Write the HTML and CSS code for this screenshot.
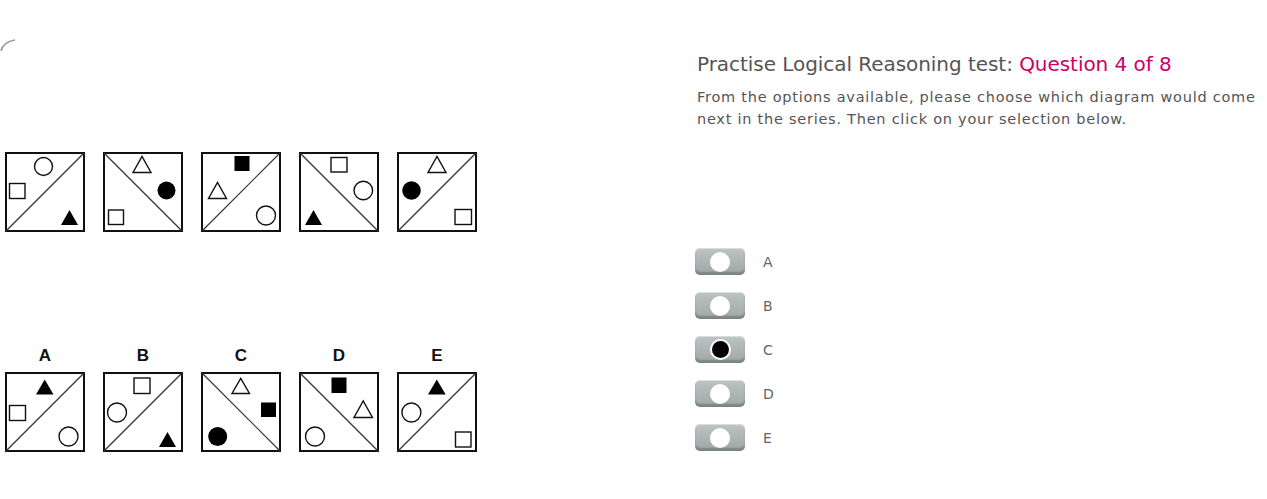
FILE: index.html
```html
<!DOCTYPE html>
<html>
<head>
<meta charset="utf-8">
<link rel="stylesheet" href="styles.css">
</head>
<body>
<div class="page">
  <div class="left">
    <svg class="corner" width="16" height="14" viewBox="0 0 16 14"><path d="M1 13 Q3 4 15 2" fill="none" stroke="#999" stroke-width="1.6"/></svg>
    <div class="row seq">
      <svg class="box" viewBox="0 0 80 80"><rect x="1" y="1" width="78" height="78" fill="#fff" stroke="#111" stroke-width="2"/><line x1="1" y1="79" x2="79" y2="1" stroke="#333" stroke-width="1.2"/><circle cx="38.5" cy="14.5" r="9" fill="none" stroke="#111" stroke-width="1.4"/><rect x="4.5" y="31.5" width="15.5" height="15" fill="none" stroke="#111" stroke-width="1.4"/><polygon points="56,73 73,73 64.5,58" fill="#000"/></svg>
      <svg class="box" viewBox="0 0 80 80"><rect x="1" y="1" width="78" height="78" fill="#fff" stroke="#111" stroke-width="2"/><line x1="1" y1="1" x2="79" y2="79" stroke="#333" stroke-width="1.2"/><polygon points="30,20.5 48,20.5 39,4.5" fill="none" stroke="#111" stroke-width="1.4"/><circle cx="63.5" cy="38.5" r="9" fill="#000"/><rect x="5.5" y="58" width="15" height="14.5" fill="none" stroke="#111" stroke-width="1.4"/></svg>
      <svg class="box" viewBox="0 0 80 80"><rect x="1" y="1" width="78" height="78" fill="#fff" stroke="#111" stroke-width="2"/><line x1="1" y1="79" x2="79" y2="1" stroke="#333" stroke-width="1.2"/><rect x="33.5" y="4" width="15" height="15" fill="#000"/><polygon points="7.5,46.5 25.5,46.5 16.5,30.5" fill="none" stroke="#111" stroke-width="1.4"/><circle cx="65" cy="63.5" r="9.5" fill="none" stroke="#111" stroke-width="1.4"/></svg>
      <svg class="box" viewBox="0 0 80 80"><rect x="1" y="1" width="78" height="78" fill="#fff" stroke="#111" stroke-width="2"/><line x1="1" y1="1" x2="79" y2="79" stroke="#333" stroke-width="1.2"/><rect x="32" y="5.5" width="16" height="14.5" fill="none" stroke="#111" stroke-width="1.4"/><circle cx="64.3" cy="38.5" r="9.3" fill="none" stroke="#111" stroke-width="1.4"/><polygon points="6,73 23,73 14.5,58" fill="#000"/></svg>
      <svg class="box" viewBox="0 0 80 80"><rect x="1" y="1" width="78" height="78" fill="#fff" stroke="#111" stroke-width="2"/><line x1="1" y1="79" x2="79" y2="1" stroke="#333" stroke-width="1.2"/><polygon points="31,20.5 49,20.5 40,4.5" fill="none" stroke="#111" stroke-width="1.4"/><circle cx="14.5" cy="38.5" r="9.3" fill="#000"/><rect x="58" y="57.5" width="16.5" height="15" fill="none" stroke="#111" stroke-width="1.4"/></svg>
    </div>
    <div class="row letters">
      <span class="letter">A</span><span class="letter">B</span><span class="letter">C</span><span class="letter">D</span><span class="letter">E</span>
    </div>
    <div class="row">
      <svg class="box" viewBox="0 0 80 80"><rect x="1" y="1" width="78" height="78" fill="#fff" stroke="#111" stroke-width="2"/><line x1="1" y1="79" x2="79" y2="1" stroke="#333" stroke-width="1.2"/><polygon points="31,22.5 48.5,22.5 39.7,7.5" fill="#000"/><rect x="4.5" y="33.5" width="16" height="15" fill="none" stroke="#111" stroke-width="1.4"/><circle cx="63.5" cy="64.5" r="9.5" fill="none" stroke="#111" stroke-width="1.4"/></svg>
      <svg class="box" viewBox="0 0 80 80"><rect x="1" y="1" width="78" height="78" fill="#fff" stroke="#111" stroke-width="2"/><line x1="1" y1="79" x2="79" y2="1" stroke="#333" stroke-width="1.2"/><rect x="31" y="6" width="16" height="15.5" fill="none" stroke="#111" stroke-width="1.4"/><circle cx="14" cy="40.5" r="9.5" fill="none" stroke="#111" stroke-width="1.4"/><polygon points="56,75 73,75 64.5,60" fill="#000"/></svg>
      <svg class="box" viewBox="0 0 80 80"><rect x="1" y="1" width="78" height="78" fill="#fff" stroke="#111" stroke-width="2"/><line x1="1" y1="1" x2="79" y2="79" stroke="#333" stroke-width="1.2"/><polygon points="31,21.5 48.5,21.5 39.7,6.5" fill="none" stroke="#111" stroke-width="1.4"/><rect x="60" y="30.5" width="15" height="14.5" fill="#000"/><circle cx="16.7" cy="64.5" r="9.5" fill="#000"/></svg>
      <svg class="box" viewBox="0 0 80 80"><rect x="1" y="1" width="78" height="78" fill="#fff" stroke="#111" stroke-width="2"/><line x1="1" y1="1" x2="79" y2="79" stroke="#333" stroke-width="1.2"/><rect x="32.5" y="5.5" width="15" height="15.5" fill="#000"/><polygon points="55,45.5 73.5,45.5 64.2,29" fill="none" stroke="#111" stroke-width="1.4"/><circle cx="16" cy="64.5" r="9.5" fill="none" stroke="#111" stroke-width="1.4"/></svg>
      <svg class="box" viewBox="0 0 80 80"><rect x="1" y="1" width="78" height="78" fill="#fff" stroke="#111" stroke-width="2"/><line x1="1" y1="79" x2="79" y2="1" stroke="#333" stroke-width="1.2"/><polygon points="31,22.5 48.7,22.5 39.8,7.5" fill="#000"/><circle cx="14.4" cy="40.5" r="9.5" fill="none" stroke="#111" stroke-width="1.4"/><rect x="58.5" y="60" width="15.5" height="15" fill="none" stroke="#111" stroke-width="1.4"/></svg>
    </div>
  </div>
  <div class="right">
    <h1 class="title">Practise Logical Reasoning test: <span class="accent">Question 4 of 8</span></h1>
    <p class="intro">From the options available, please choose which diagram would come next in the series. Then click on your selection below.</p>
    <ul class="options">
      <li class="option"><span class="btn"><span class="dot"></span></span><span class="opt-label">A</span></li>
      <li class="option"><span class="btn"><span class="dot"></span></span><span class="opt-label">B</span></li>
      <li class="option"><span class="btn"><span class="dot selected"></span></span><span class="opt-label">C</span></li>
      <li class="option"><span class="btn"><span class="dot"></span></span><span class="opt-label">D</span></li>
      <li class="option"><span class="btn"><span class="dot"></span></span><span class="opt-label">E</span></li>
    </ul>
  </div>
</div>
</body>
</html>
```

FILE: styles.css
```css
* { box-sizing: border-box; }
html, body { margin: 0; padding: 0; background: #fff; }
body { font-family: "DejaVu Sans", Verdana, sans-serif; }
.page { display: flex; width: 1267px; height: 499px; }
.left { width: 697px; padding: 38px 0 0 5px; display: flex; flex-direction: column; }
.corner { display: block; margin-left: -5px; }
.row { display: flex; gap: 18px; }
.seq { margin-top: 100px; }
.box { width: 80px; height: 80px; display: block; }
.letters { margin-top: 115px; height: 25px; }
.letter { width: 80px; text-align: center; font-family: "Liberation Sans", Arial, sans-serif; font-weight: bold; font-size: 17px; line-height: 18px; color: #111; }
.right { flex: 1; padding-top: 52px; }
.title { margin: 0; font-weight: normal; font-size: 20px; line-height: 24px; color: #555; letter-spacing: -0.05px; }
.accent { color: #cc0066; }
.intro { margin: 10px 0 0; font-size: 14.5px; line-height: 22px; color: #555; width: 570px; letter-spacing: 0.75px; }
.options { list-style: none; margin: 0; padding: 0; margin-top: 118px; margin-left: -2px; display: flex; flex-direction: column; gap: 17px; }
.option { display: flex; align-items: center; height: 27px; }
.btn { width: 50px; height: 27px; border-radius: 5px; background: linear-gradient(#bcc3c3, #aab2b2 60%, #9ea6a6); box-shadow: inset 0 -3px 2px rgba(0,0,0,0.22), inset 0 1px 1px rgba(255,255,255,0.5); display: flex; align-items: center; justify-content: center; }
.dot { width: 20px; height: 20px; border-radius: 50%; background: #fff; }
.dot.selected { background: #000; box-shadow: 0 0 0 2px #fff; width: 17px; height: 17px; }
.opt-label { margin-left: 18px; font-size: 14px; color: #666; }
```
